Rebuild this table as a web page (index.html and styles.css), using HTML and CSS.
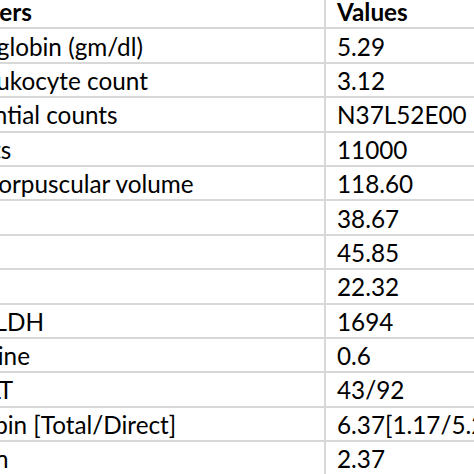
FILE: index.html
```html
<!DOCTYPE html>
<html>
<head>
<meta charset="utf-8">
<link rel="stylesheet" href="styles.css">
</head>
<body>
<table class="lab">
  <colgroup><col class="c-param"><col class="c-val"></colgroup>
  <thead>
    <tr><th class="param">Parameters</th><th class="val">Values</th></tr>
  </thead>
  <tbody>
    <tr><td class="param">Haemoglobin (gm/dl)</td><td class="val">5.29</td></tr>
    <tr><td class="param">Total leukocyte count</td><td class="val">3.12</td></tr>
    <tr><td class="param">Differential counts</td><td class="val">N37L52E00 M11</td></tr>
    <tr><td class="param">Platelets</td><td class="val">11000</td></tr>
    <tr><td class="param">Mean corpuscular volume</td><td class="val">118.60</td></tr>
    <tr><td class="param">MCH</td><td class="val">38.67</td></tr>
    <tr><td class="param">MCHC</td><td class="val">45.85</td></tr>
    <tr><td class="param">RDW</td><td class="val">22.32</td></tr>
    <tr><td class="param">Serum LDH</td><td class="val">1694</td></tr>
    <tr><td class="param">Creatinine</td><td class="val">0.6</td></tr>
    <tr><td class="param">AST/ALT</td><td class="val">43/92</td></tr>
    <tr><td class="param">S.Bilirubin [Total/Direct]</td><td class="val">6.37[1.17/5.20]</td></tr>
    <tr><td class="param">Albumin</td><td class="val">2.37</td></tr>
  </tbody>
</table>
</body>
</html>
```
FILE: styles.css
```css
html, body {
  margin: 0;
  padding: 0;
  overflow: hidden;
  background: #ffffff;
}
body {
  width: 474px;
  height: 474px;
  font-family: Lato, "Open Sans", sans-serif;
  color: #000000;
}
.lab {
  border-collapse: collapse;
  table-layout: fixed;
  width: 680px;
  margin-top: -7px;
  margin-left: -96px;
  font-size: 24.3px;
  white-space: nowrap;
}
.c-param { width: 420px; }
.c-val { width: 260px; }
.lab th, .lab td {
  border: 2px solid #d8d8d8;
  height: 31.4px;
  line-height: 31px;
  padding: 1px 0 0 11px;
  text-align: left;
  vertical-align: middle;
  overflow: hidden;
}
.lab th {
  font-weight: bold;
}
.lab td.param {
  padding-left: 14px;
}
.lab th.param {
  padding-left: 3px;
}
```
